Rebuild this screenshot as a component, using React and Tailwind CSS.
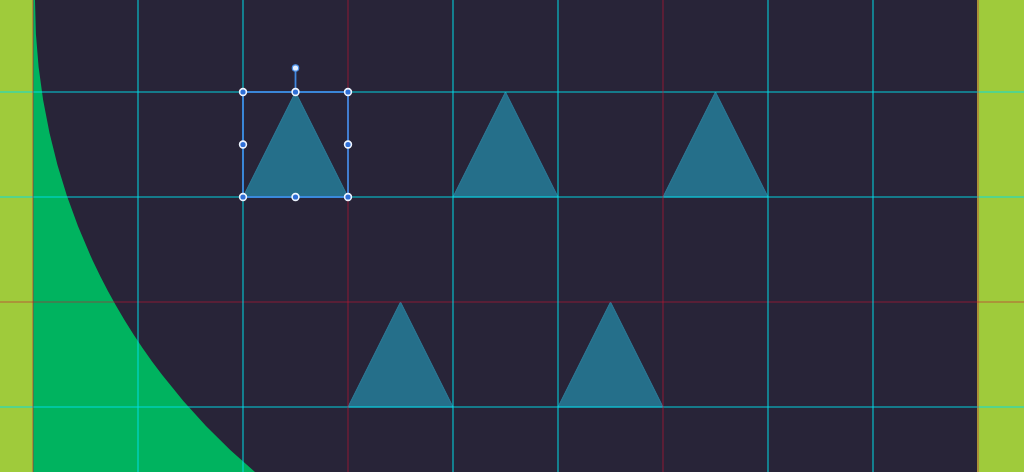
import React from "react";

const H = [92, 197, 302, 407];
const V = [33, 138, 243, 348, 453, 558, 663, 768, 873, 978];
const isMajorV = (x) => (x - 33) % 315 === 0;
const isMajorH = (y) => (y + 13) % 315 === 0;

const tris = [
  [243, 92],
  [453, 92],
  [663, 92],
  [348, 302],
  [558, 302],
];

function Handle({ x, y }) {
  return <circle cx={x} cy={y} r="3.4" fill="#2f6fd6" stroke="#eef5ff" strokeWidth="1.6" />;
}

export default function App() {
  const teal = "rgba(0,222,232,0.62)";
  const red = "rgba(200,20,50,0.4)";
  const sx = 243, sy = 92, s = 105;
  return (
    <div className="relative flex h-[472px] w-[1024px] overflow-hidden bg-[#282438]">
      <div className="w-[33px] shrink-0 bg-[#9fcb3b]" />
      <div className="flex-1">
        <svg width="944" height="472" viewBox="33 0 944 472" className="block">
          <rect x="33" y="0" width="944" height="472" fill="#282438" />
          <path d="M33 0 L35 0 A616 616 0 0 0 255 472 L33 472 Z" fill="#00b35f" />
          {tris.map(([x, y], i) => (
            <polygon
              key={i}
              points={`${x},${y + s} ${x + s / 2},${y} ${x + s},${y + s}`}
              fill="#256f8a"
              stroke="#2b7e9c"
              strokeWidth="1"
            />
          ))}
        </svg>
      </div>
      <div className="w-[47px] shrink-0 bg-[#9fcb3b]" />
      <svg width="1024" height="472" className="pointer-events-none absolute left-0 top-0">
        {H.map((y) => (
          <line key={"h" + y} x1="0" x2="1024" y1={y} y2={y} stroke={isMajorH(y) ? red : teal} strokeWidth="1.6" />
        ))}
        {V.map((x) => (
          <line key={"v" + x} x1={x} x2={x} y1="0" y2="472" stroke={isMajorV(x) ? red : teal} strokeWidth="1.6" />
        ))}
        <rect x={sx} y={sy} width={s} height={s} fill="none" stroke="#3f88e0" strokeWidth="1.8" />
        <line x1={sx + s / 2} x2={sx + s / 2} y1={sy} y2="68" stroke="#3f88e0" strokeWidth="1.8" />
        <circle cx={sx + s / 2} cy="68" r="3.2" fill="#e3eeff" stroke="#4a8fe6" strokeWidth="1.2" />
        {[
          [sx, sy],
          [sx + s / 2, sy],
          [sx + s, sy],
          [sx, sy + s / 2],
          [sx + s, sy + s / 2],
          [sx, sy + s],
          [sx + s / 2, sy + s],
          [sx + s, sy + s],
        ].map(([x, y], i) => (
          <Handle key={i} x={x} y={y} />
        ))}
      </svg>
    </div>
  );
}
